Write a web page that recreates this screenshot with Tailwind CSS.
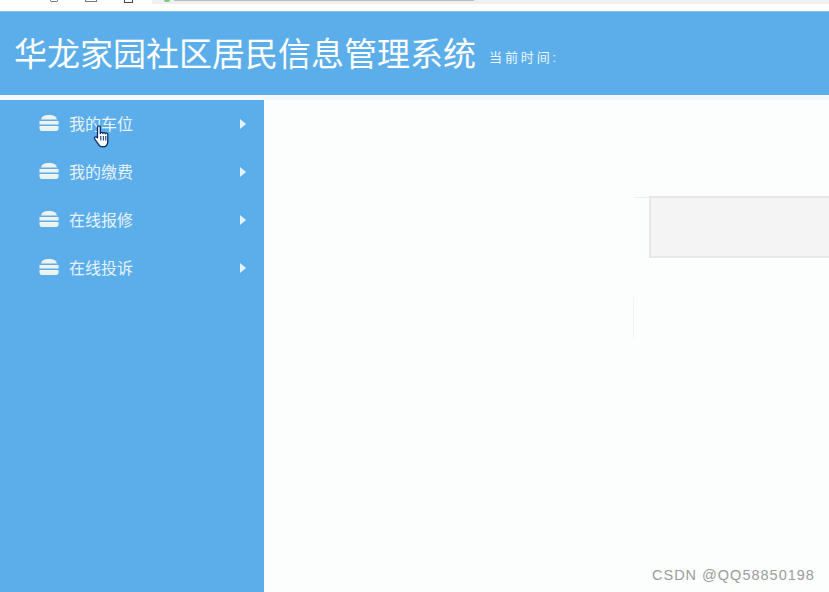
<!DOCTYPE html>
<html lang="zh">
<head>
<meta charset="utf-8">
<script src="https://cdn.jsdelivr.net/npm/@tailwindcss/browser@4"></script>
</head>
<body class="w-[829px] h-[592px] overflow-hidden bg-[#fcfefd] font-['Liberation_Sans','Noto_Sans_CJK_SC',sans-serif]">
<div class="relative flex flex-col h-[592px]">
  <div class="h-[11px] bg-[#fffcfe] shrink-0 overflow-hidden">
    <div class="h-[4px] bg-[#f0f0f0] flex items-start">
      <div class="w-[152px] h-[4px] bg-white flex items-start pl-[50px] gap-[27px] overflow-hidden">
        <span class="block w-[8px] h-[2px] rounded-b-full border-b border-x border-[#777]"></span>
        <span class="block w-[12px] h-[2px] border-b border-x border-[#777]"></span>
        <span class="block w-[9px] h-[3px] border-b border-x border-[#444]"></span>
      </div>
      <div class="ml-[12px] flex items-start gap-[4px] h-[2px] overflow-hidden">
        <span class="block w-[6px] h-[2px] rounded-b-full bg-[#7cc97c]"></span>
        <span class="block w-[300px] h-[1px] bg-[#9a9a9a]/60"></span>
      </div>
    </div>
  </div>
  <header class="h-[84px] bg-[#5baeea] border-t border-[#7cc4f0] flex items-center pl-[14px] shrink-0 text-white">
    <span class="text-[33px] leading-none whitespace-nowrap mt-[2px]">华龙家园社区居民信息管理系统</span>
    <span class="text-[13px] leading-none tracking-[2.900px] ml-[13px] mt-[8px] whitespace-nowrap text-[#eef7fd]">当前时间:</span>
  </header>
  <div class="h-[5px] shrink-0 bg-[#f1f9fd]"></div>
  <div class="flex flex-1 min-h-0">
    <nav class="w-[264px] bg-[#5baeea] text-[#e6f3fc] text-[16px] shrink-0">
      <a class="h-[48px] flex items-center pl-[39px] pr-[18px]">
        <svg width="20" height="16" viewBox="0 0 20 16" class="shrink-0 -mt-[2px]"><path fill="#eef3f0" d="M2 4.500C3 1 5.500 0 10 0s7 1 8 4.500zM.5 6h19v3.500H.5zM.5 11h19v2.500q0 2-2 2.500h-15q-2-.5-2-2.500z"/></svg>
        <span class="ml-[10px] mt-[1px]">我的车位</span>
        <svg width="6" height="10" viewBox="0 0 6 10" class="ml-auto"><path fill="#e6f3fc" d="M0 0l6 5-6 5z"/></svg>
      </a>
      <a class="h-[48px] flex items-center pl-[39px] pr-[18px]">
        <svg width="20" height="16" viewBox="0 0 20 16" class="shrink-0 -mt-[2px]"><path fill="#eef3f0" d="M2 4.500C3 1 5.500 0 10 0s7 1 8 4.500zM.5 6h19v3.500H.5zM.5 11h19v2.500q0 2-2 2.500h-15q-2-.5-2-2.500z"/></svg>
        <span class="ml-[10px] mt-[1px]">我的缴费</span>
        <svg width="6" height="10" viewBox="0 0 6 10" class="ml-auto"><path fill="#e6f3fc" d="M0 0l6 5-6 5z"/></svg>
      </a>
      <a class="h-[48px] flex items-center pl-[39px] pr-[18px]">
        <svg width="20" height="16" viewBox="0 0 20 16" class="shrink-0 -mt-[2px]"><path fill="#eef3f0" d="M2 4.500C3 1 5.500 0 10 0s7 1 8 4.500zM.5 6h19v3.500H.5zM.5 11h19v2.500q0 2-2 2.500h-15q-2-.5-2-2.500z"/></svg>
        <span class="ml-[10px] mt-[1px]">在线报修</span>
        <svg width="6" height="10" viewBox="0 0 6 10" class="ml-auto"><path fill="#e6f3fc" d="M0 0l6 5-6 5z"/></svg>
      </a>
      <a class="h-[48px] flex items-center pl-[39px] pr-[18px]">
        <svg width="20" height="16" viewBox="0 0 20 16" class="shrink-0 -mt-[2px]"><path fill="#eef3f0" d="M2 4.500C3 1 5.500 0 10 0s7 1 8 4.500zM.5 6h19v3.500H.5zM.5 11h19v2.500q0 2-2 2.500h-15q-2-.5-2-2.500z"/></svg>
        <span class="ml-[10px] mt-[1px]">在线投诉</span>
        <svg width="6" height="10" viewBox="0 0 6 10" class="ml-auto"><path fill="#e6f3fc" d="M0 0l6 5-6 5z"/></svg>
      </a>
    </nav>
    <main class="flex-1">
      <div class="ml-[385px] mt-[96px] h-[62px] bg-[#f3f4f3] border-2 border-r-0 border-[#e6e7e6]"></div>
    </main>
  </div>
  <span class="absolute left-[634px] top-[197px] w-[15px] h-px bg-[#eeefee]"></span>
  <span class="absolute left-[633px] top-[297px] w-px h-[41px] bg-[#f1f2f1]"></span>
  <svg viewBox="0 0 18 23" class="absolute left-[93px] top-[125px] w-[18px] h-[23px]"><path fill="#fff" stroke="#0b2a66" stroke-width="1.300" stroke-linejoin="round" d="M4.500 2.300c0-1.800 2.800-1.800 2.800 0v6.200c0-1.500 2.600-1.500 2.600 0 0-1.300 2.500-1.300 2.500.3 0-1 2.400-1 2.400.8v6.400c0 2.500-1.600 5-2.800 5.600H7.500C6 20.500 4 17.500 1.800 14.200c-1.200-1.900.8-3.300 2.700-1.500z"/><path stroke="#0b2a66" d="M7.800 11v4.500M10.300 11v4.500M12.800 11v4.500"/></svg>
  <div class="absolute left-[652px] top-[566px] text-[14.500px] leading-[18px] tracking-[1px] text-[#9a9c9b] whitespace-nowrap">CSDN @QQ58850198</div>
</div>
</body>
</html>
